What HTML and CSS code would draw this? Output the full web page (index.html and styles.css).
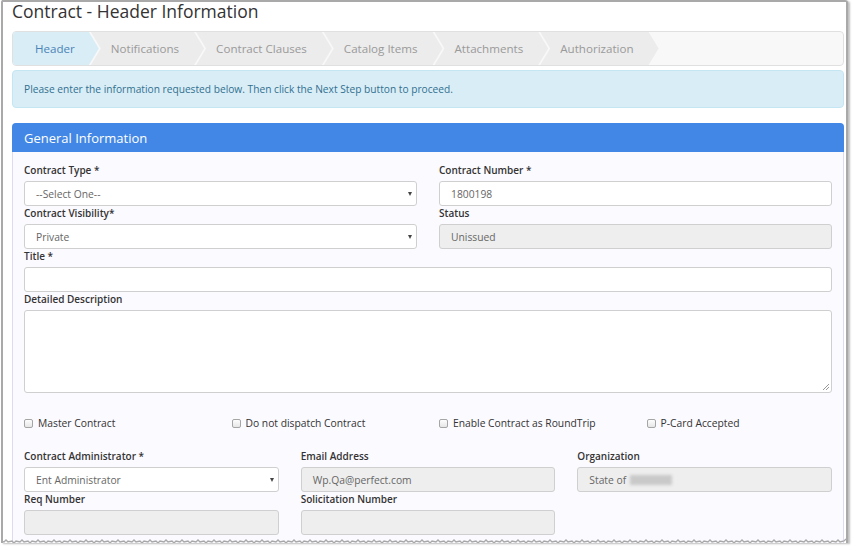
FILE: index.html
```html
<!DOCTYPE html>
<html>
<head>
<meta charset="utf-8">
<link rel="stylesheet" href="styles.css">
</head>
<body>
<div class="frame">
  <h1 class="title">Contract - Header Information</h1>
  <div class="steps">
    <div class="step active first">Header</div>
    <div class="step">Notifications</div>
    <div class="step">Contract Clauses</div>
    <div class="step">Catalog Items</div>
    <div class="step">Attachments</div>
    <div class="step">Authorization</div>
  </div>
  <div class="alert">Please enter the information requested below. Then click the Next Step button to proceed.</div>
  <div class="panel">
    <div class="panel-heading">General Information</div>
    <div class="panel-body">
      <div class="grid two">
        <div class="field">
          <label class="lbl">Contract Type *</label>
          <div class="control select">--Select One--</div>
        </div>
        <div class="field">
          <label class="lbl">Contract Number *</label>
          <div class="control">1800198</div>
        </div>
        <div class="field">
          <label class="lbl">Contract Visibility*</label>
          <div class="control select">Private</div>
        </div>
        <div class="field">
          <label class="lbl">Status</label>
          <div class="control disabled">Unissued</div>
        </div>
      </div>
      <div class="field">
        <label class="lbl">Title *</label>
        <div class="control"></div>
      </div>
      <div class="field">
        <label class="lbl">Detailed Description</label>
        <div class="control textarea"><span class="grip"></span></div>
      </div>
      <div class="grid four checks">
        <div class="check"><span class="box"></span>Master Contract</div>
        <div class="check"><span class="box"></span>Do not dispatch Contract</div>
        <div class="check"><span class="box"></span>Enable Contract as RoundTrip</div>
        <div class="check"><span class="box"></span>P-Card Accepted</div>
      </div>
      <div class="grid three">
        <div class="field">
          <label class="lbl">Contract Administrator *</label>
          <div class="control select">Ent Administrator</div>
        </div>
        <div class="field">
          <label class="lbl">Email Address</label>
          <div class="control disabled">Wp.Qa@perfect.com</div>
        </div>
        <div class="field">
          <label class="lbl">Organization</label>
          <div class="control disabled">State of <span class="blur"></span></div>
        </div>
        <div class="field">
          <label class="lbl">Req Number</label>
          <div class="control disabled"></div>
        </div>
        <div class="field">
          <label class="lbl">Solicitation Number</label>
          <div class="control disabled"></div>
        </div>
      </div>
    </div>
  </div>
  <svg class="torn" width="852" height="8" viewBox="0 0 852 8">
    <polyline fill="none" stroke="#a8a8a8" stroke-width="1.3" points="0,3 4,4 6,2 8,4 12,3 14,5 16,3 20,4 22,2 24,4 28,3 30,5 32,3 36,4 38,2 40,4 44,3 46,5 48,3 52,4 54,2 56,4 60,3 62,5 64,3 68,4 70,2 72,4 76,3 78,5 80,3 84,4 86,2 88,4 92,3 94,5 96,3 100,4 102,2 104,4 108,3 110,5 112,3 116,4 118,2 120,4 124,3 126,5 128,3 132,4 134,2 136,4 140,3 142,5 144,3 148,4 150,2 152,4 156,3 158,5 160,3 164,4 166,2 168,4 172,3 174,5 176,3 180,4 182,2 184,4 188,3 190,5 192,3 196,4 198,2 200,4 204,3 206,5 208,3 212,4 214,2 216,4 220,3 222,5 224,3 228,4 230,2 232,4 236,3 238,5 240,3 244,4 246,2 248,4 252,3 254,5 256,3 260,4 262,2 264,4 268,3 270,5 272,3 276,4 278,2 280,4 284,3 286,5 288,3 292,4 294,2 296,4 300,3 302,5 304,3 308,4 310,2 312,4 316,3 318,5 320,3 324,4 326,2 328,4 332,3 334,5 336,3 340,4 342,2 344,4 348,3 350,5 352,3 356,4 358,2 360,4 364,3 366,5 368,3 372,4 374,2 376,4 380,3 382,5 384,3 388,4 390,2 392,4 396,3 398,5 400,3 404,4 406,2 408,4 412,3 414,5 416,3 420,4 422,2 424,4 428,3 430,5 432,3 436,4 438,2 440,4 444,3 446,5 448,3 452,4 454,2 456,4 460,3 462,5 464,3 468,4 470,2 472,4 476,3 478,5 480,3 484,4 486,2 488,4 492,3 494,5 496,3 500,4 502,2 504,4 508,3 510,5 512,3 516,4 518,2 520,4 524,3 526,5 528,3 532,4 534,2 536,4 540,3 542,5 544,3 548,4 550,2 552,4 556,3 558,5 560,3 564,4 566,2 568,4 572,3 574,5 576,3 580,4 582,2 584,4 588,3 590,5 592,3 596,4 598,2 600,4 604,3 606,5 608,3 612,4 614,2 616,4 620,3 622,5 624,3 628,4 630,2 632,4 636,3 638,5 640,3 644,4 646,2 648,4 652,3 654,5 656,3 660,4 662,2 664,4 668,3 670,5 672,3 676,4 678,2 680,4 684,3 686,5 688,3 692,4 694,2 696,4 700,3 702,5 704,3 708,4 710,2 712,4 716,3 718,5 720,3 724,4 726,2 728,4 732,3 734,5 736,3 740,4 742,2 744,4 748,3 750,5 752,3 756,4 758,2 760,4 764,3 766,5 768,3 772,4 774,2 776,4 780,3 782,5 784,3 788,4 790,2 792,4 796,3 798,5 800,3 804,4 806,2 808,4 812,3 814,5 816,3 820,4 822,2 824,4 828,3 830,5 832,3 836,4 838,2 840,4 844,3 846,1"/>
  </svg>
</div>
</body>
</html>
```

FILE: styles.css
```css
* { box-sizing: border-box; }
html, body { margin: 0; padding: 0; background: #fff; }
body {
  font-family: "Open Sans", "Liberation Sans", sans-serif;
  color: #333;
  width: 852px;
  height: 548px;
  overflow: hidden;
}
.frame {
  position: relative;
  margin-left: 1px;
  width: 847px;
  height: 543px;
  border: 2px solid #a9a9a9;
  border-bottom: none;
  border-radius: 2px 3px 0 0;
  box-shadow: 2px 1px 2px rgba(0,0,0,0.25);
  padding: 0 2px 0 9px;
  overflow: hidden;
  background: #fff;
}
.title {
  margin: 0;
  height: 29px;
  font-size: 17.5px;
  font-weight: 400;
  line-height: 19px;
  color: #333;
}
.steps {
  display: flex;
  height: 35px;
  border: 1px solid #e0e0e0;
  border-radius: 4px;
  background: #f8f8f8;
  overflow: hidden;
}
.step {
  height: 100%;
  display: flex;
  align-items: center;
  padding: 0 25px 0 20px;
  margin-right: -8px;
  background: #ececec;
  color: #9a9a9a;
  font-size: 11.6px;
  clip-path: polygon(0 0, calc(100% - 10px) 0, 100% 50%, calc(100% - 10px) 100%, 0 100%, 10px 50%);
}
.step.first {
  padding-left: 22px;
  padding-right: 24px;
  clip-path: polygon(0 0, calc(100% - 10px) 0, 100% 50%, calc(100% - 10px) 100%, 0 100%);
}
.step.active {
  background: #d9edf7;
  color: #4a84b6;
}
.alert {
  margin-top: 4px;
  height: 38px;
  border: 1px solid #c4e6f2;
  border-radius: 4px;
  background: #d9edf7;
  color: #31708f;
  font-size: 10.2px;
  display: flex;
  align-items: center;
  padding-left: 11px;
}
.panel {
  margin-top: 15px;
  border: 1px solid #dcdcf0;
  border-radius: 4px 4px 0 0;
  background: #fbfaff;
}
.panel-heading {
  height: 29px;
  margin: -1px -1px 0;
  background: #4287e5;
  border-radius: 4px 4px 0 0;
  color: #fff;
  font-size: 13px;
  display: flex;
  align-items: center;
  padding-left: 12px;
}
.panel-body {
  padding: 11px 11px 20px 11px;
}
.grid { display: grid; column-gap: 22px; }
.grid.two { grid-template-columns: 1fr 1fr; }
.grid.three { grid-template-columns: 1fr 1fr 1fr; }
.grid.four { grid-template-columns: 1fr 1fr 1fr 1fr; }
.lbl {
  display: block;
  height: 18px;
  font-size: 10px;
  font-weight: 600;
  line-height: 14px;
  color: #333;
}
.control {
  position: relative;
  height: 25px;
  border: 1px solid #cfcfcf;
  border-radius: 3px;
  background: #fff;
  font-size: 10.3px;
  color: #666;
  display: flex;
  align-items: center;
  padding-left: 11px;
}
.control.select::after {
  content: "";
  position: absolute;
  right: 4px;
  top: 10px;
  border-left: 2.5px solid transparent;
  border-right: 2.5px solid transparent;
  border-top: 4px solid #444;
}
.control.disabled { background: #eeeeee; }
.control.textarea { height: 83px; }
.grip {
  position: absolute;
  right: 2px;
  bottom: 2px;
  width: 6px;
  height: 6px;
  background: linear-gradient(135deg, transparent 45%, #999 45%, #999 55%, transparent 55%, transparent 70%, #999 70%, #999 80%, transparent 80%);
}
.checks {
  margin-top: 22px;
  height: 34px;
  align-items: start;
}
.check {
  display: flex;
  align-items: center;
  font-size: 10.3px;
  color: #333;
  height: 16px;
}
.box {
  width: 9px;
  height: 9px;
  border: 1px solid #a5a5a5;
  border-radius: 2px;
  background: linear-gradient(#fdfdfd, #e6e6e6);
  margin-right: 5px;
}
.blur {
  display: inline-block;
  width: 42px;
  height: 10px;
  margin-left: 4px;
  background: #c9c9c9;
  filter: blur(1.5px);
}
.torn {
  position: absolute;
  left: -3px;
  top: 536px;
}
.frame::after {
  content: "";
  position: absolute;
  left: -3px;
  right: -3px;
  top: 541px;
  height: 10px;
  background: #fff;
}
```
